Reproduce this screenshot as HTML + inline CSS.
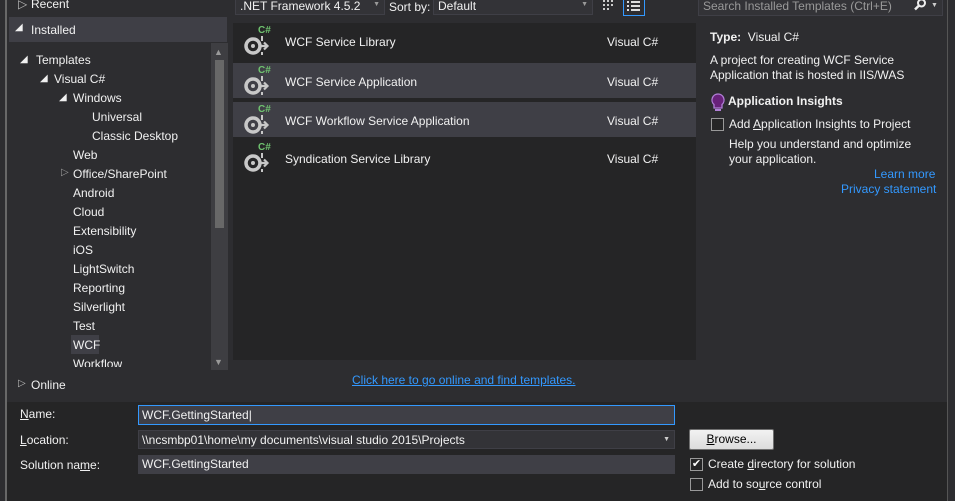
<!DOCTYPE html>
<html><head><meta charset="utf-8"><style>
*{margin:0;padding:0;box-sizing:border-box}
body{width:955px;height:501px;background:#2d2d30;font-family:"Liberation Sans",sans-serif;font-size:12px;color:#f1f1f1;position:relative;overflow:hidden}
.a{position:absolute;white-space:nowrap}
.row{position:absolute;left:233px;width:463px;height:37px}
.row .n{position:absolute;left:52px;top:12px}
.row .v{position:absolute;left:374px;top:12px}
.ic{position:absolute;left:8px;top:0px}
.box{position:absolute;background:#3f3f46;height:20px;padding:3px 4px;color:#f1f1f1}
.cb{position:absolute;width:13px;height:13px;border:1px solid #999;background:#252526}
u{text-decoration:underline}
</style></head><body>
<div class="a" style="left:5px;top:0;width:2px;height:501px;background:#686868"></div>
<div class="a" style="left:947px;top:0;width:1px;height:501px;background:#555"></div>
<div class="a" style="left:18px;top:-3px;color:#bbb">&#9655;</div>
<div class="a" style="left:31px;top:-3px">Recent</div>
<div class="a" style="left:9px;top:17px;width:218px;height:25px;background:#3f3f46"></div>
<div class="a" style="left:15px;top:22px;font-size:10px">&#9698;</div>
<div class="a" style="left:31px;top:23px">Installed</div>
<div class="a" style="left:20px;top:54px;font-size:10px">&#9698;</div>
<div class="a" style="left:36px;top:53px">Templates</div>
<div class="a" style="left:40px;top:73px;font-size:10px">&#9698;</div>
<div class="a" style="left:54px;top:72px">Visual C#</div>
<div class="a" style="left:59px;top:92px;font-size:10px">&#9698;</div>
<div class="a" style="left:73px;top:91px">Windows</div>
<div class="a" style="left:92px;top:110px">Universal</div>
<div class="a" style="left:92px;top:129px">Classic Desktop</div>
<div class="a" style="left:73px;top:148px">Web</div>
<div class="a" style="left:61px;top:167px;color:#999;font-size:10px">&#9655;</div>
<div class="a" style="left:73px;top:167px">Office/SharePoint</div>
<div class="a" style="left:73px;top:186px">Android</div>
<div class="a" style="left:73px;top:205px">Cloud</div>
<div class="a" style="left:73px;top:224px">Extensibility</div>
<div class="a" style="left:73px;top:243px">iOS</div>
<div class="a" style="left:73px;top:262px">LightSwitch</div>
<div class="a" style="left:73px;top:281px">Reporting</div>
<div class="a" style="left:73px;top:300px">Silverlight</div>
<div class="a" style="left:73px;top:319px">Test</div>
<div class="a" style="left:71px;top:335px;width:28px;height:19px;background:#3f3f46"></div>
<div class="a" style="left:73px;top:338px">WCF</div>
<div class="a" style="left:73px;top:357px;height:10px;overflow:hidden">Workflow</div>
<div class="a" style="left:211px;top:43px;width:17px;height:327px;background:#3e3e42"></div>
<div class="a" style="left:215px;top:60px;width:9px;height:168px;background:#686868"></div>
<div class="a" style="left:214px;top:47px;color:#999;font-size:9px">&#9650;</div>
<div class="a" style="left:214px;top:357px;color:#999;font-size:9px">&#9660;</div>
<div class="a" style="left:18px;top:378px;color:#bbb;font-size:10px">&#9655;</div>
<div class="a" style="left:31px;top:378px">Online</div>
<div class="a" style="left:235px;top:-2px;width:150px;height:17px;background:#333337;border:1px solid #3f3f46;padding:0 4px">.NET Framework 4.5.2<span style="position:absolute;right:4px;top:2px;font-size:7px;color:#999">&#9660;</span></div>
<div class="a" style="left:389px;top:0px">Sort by:</div>
<div class="a" style="left:433px;top:-2px;width:160px;height:17px;background:#333337;border:1px solid #3f3f46;padding:0 4px">Default<span style="position:absolute;right:4px;top:2px;font-size:7px;color:#999">&#9660;</span></div>
<svg class="a" style="left:602px;top:0" width="14" height="12"><g fill="#ccc"><rect x="1" y="0" width="2" height="2"/><rect x="5" y="0" width="2" height="2"/><rect x="9" y="0" width="2" height="2"/><rect x="1" y="4" width="2" height="2"/><rect x="5" y="4" width="2" height="2"/><rect x="9" y="4" width="2" height="2"/><rect x="1" y="8" width="2" height="2"/><rect x="5" y="8" width="2" height="2"/></g></svg>
<div class="a" style="left:623px;top:-2px;width:22px;height:18px;border:1px solid #3399ff"></div>
<svg class="a" style="left:627px;top:0" width="14" height="12"><g fill="#ddd"><rect x="0" y="1" width="2" height="2"/><rect x="4" y="1" width="9" height="2"/><rect x="0" y="5" width="2" height="2"/><rect x="4" y="5" width="9" height="2"/><rect x="0" y="9" width="2" height="2"/><rect x="4" y="9" width="9" height="2"/></g></svg>
<div class="a" style="left:698px;top:-3px;width:245px;height:19px;background:#333337;border:1px solid #3f3f46;padding:1px 4px;color:#999">Search Installed Templates (Ctrl+E)</div>
<svg class="a" style="left:913px;top:-2px" width="14" height="14"><circle cx="8.5" cy="5" r="3.5" fill="none" stroke="#eee" stroke-width="2"/><path d="M6 7.5L2 11.5" stroke="#eee" stroke-width="2.5"/></svg>
<div class="a" style="left:931px;top:2px;font-size:7px;color:#ccc">&#9660;</div>
<div class="a" style="left:233px;top:23px;width:463px;height:337px;background:#252526"></div>
<div class="row" style="top:63px;background:#3f3f46;height:35px"></div>
<div class="row" style="top:102px;background:#3f3f46;height:35px"></div>
<div id="r"></div>
<div class="a" style="left:352px;top:373px;color:#3399ff;text-decoration:underline">Click here to go online and find templates.</div>
<div class="a" style="left:710px;top:30px"><b>Type:</b>&nbsp; Visual C#</div>
<div class="a" style="left:710px;top:53px;line-height:15px">A project for creating WCF Service<br>Application that is hosted in IIS/WAS</div>
<svg class="a" style="left:711px;top:93px" width="14" height="20"><path d="M7 1a6 6 0 0 0-4 10.5V15h8v-3.5A6 6 0 0 0 7 1z" fill="#68217a" stroke="#b180d7" stroke-width="1.3"/><rect x="4" y="16" width="6" height="2" fill="#b180d7"/></svg>
<div class="a" style="left:728px;top:94px;font-weight:bold">Application Insights</div>
<div class="cb" style="left:711px;top:118px"></div>
<div class="a" style="left:729px;top:117px">Add <u>A</u>pplication Insights to Project</div>
<div class="a" style="left:729px;top:137px;line-height:15px">Help you understand and optimize<br>your application.</div>
<div class="a" style="left:874px;top:167px;color:#3399ff">Learn more</div>
<div class="a" style="left:841px;top:182px;color:#3399ff">Privacy statement</div>
<div class="a" style="left:7px;top:402px;width:940px;height:99px;background:#252526"></div>
<div class="a" style="left:20px;top:407px"><u>N</u>ame:</div>
<div class="a" style="left:20px;top:433px"><u>L</u>ocation:</div>
<div class="a" style="left:20px;top:458px">Solution na<u>m</u>e:</div>
<div class="box" style="left:138px;top:405px;width:537px;border:1px solid #3399ff;padding:2px 3px">WCF.GettingStarted|</div>
<div class="box" style="left:138px;top:430px;width:537px;height:19px;background:#333337;border:1px solid #3f3f46;padding:2px 3px">\\ncsmbp01\home\my documents\visual studio 2015\Projects<span style="position:absolute;right:4px;top:5px;font-size:7px;color:#ccc">&#9660;</span></div>
<div class="box" style="left:138px;top:455px;width:537px;height:19px;padding:2px 4px">WCF.GettingStarted</div>
<div class="a" style="left:689px;top:429px;width:85px;height:21px;border-radius:2px;background:linear-gradient(#f2f2f2,#dcdcdc);border:1px solid #707070;color:#000;text-align:center;line-height:19px"><u>B</u>rowse...</div>
<div class="cb" style="left:690px;top:458px;background:#252526;color:#fff;font-size:11px;line-height:11px;text-align:center">&#10004;</div>
<div class="a" style="left:708px;top:457px">Create <u>d</u>irectory for solution</div>
<div class="cb" style="left:690px;top:478px"></div>
<div class="a" style="left:708px;top:477px">Add to so<u>u</u>rce control</div>
<script>
var names=["WCF Service Library","WCF Service Application","WCF Workflow Service Application","Syndication Service Library"];
var tops=[23,63,102,140],h='';
var icon='<svg class="ic" width="32" height="36" viewBox="0 0 32 36"><text x="17" y="10" font-family="Liberation Sans" font-weight="bold" font-size="10" fill="#6fc36f">C#</text><path d="M21 13v5M21 29v3" stroke="#c8c8c8" stroke-width="2"/><circle cx="12" cy="23" r="7" fill="none" stroke="#c8c8c8" stroke-width="3.5"/><circle cx="12" cy="23" r="2" fill="#c8c8c8"/><path d="M18 23h8M23 19.5l3.5 3.5-3.5 3.5" stroke="#c8c8c8" stroke-width="2.2" fill="none"/></svg>';
for(var i=0;i<4;i++){h+='<div class="row" style="top:'+tops[i]+'px">'+icon+'<div class="n">'+names[i]+'</div><div class="v">Visual C#</div></div>';}
document.getElementById('r').outerHTML=h;
</script>
</body></html>
